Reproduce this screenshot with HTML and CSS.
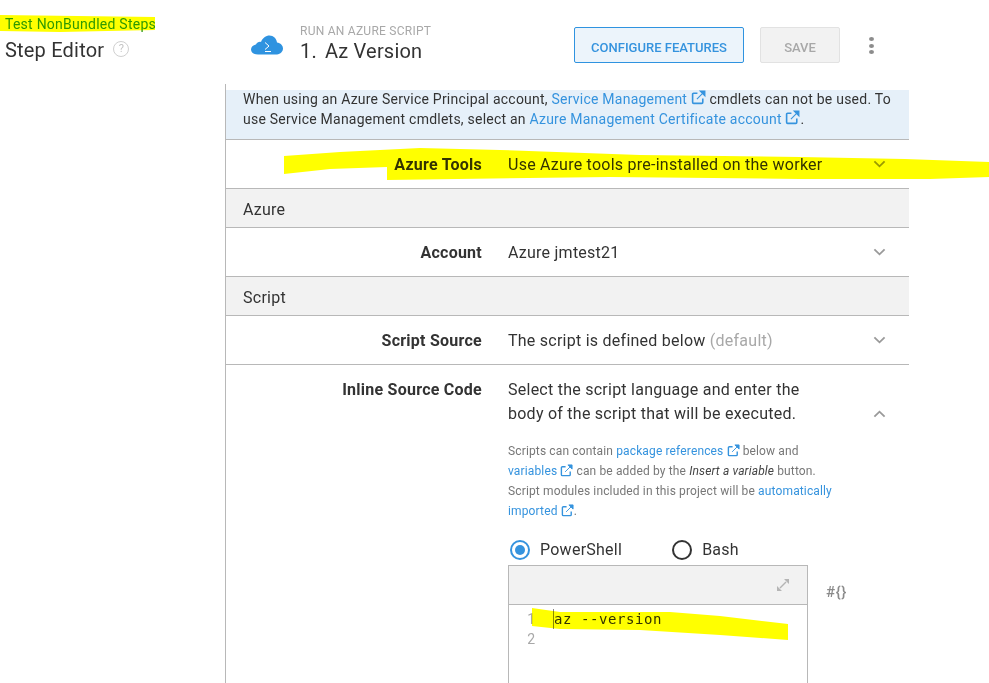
FILE: index.html
```html
<!DOCTYPE html>
<html lang="en">
<head>
<meta charset="utf-8">
<title>Step Editor</title>
<link rel="stylesheet" href="styles.css">
</head>
<body>
<div class="page">
  <svg class="defs" width="0" height="0"><symbol id="ext" viewBox="0 0 14 14"><path d="M11 8v3.500a1 1 0 0 1-1 1H2.500a1 1 0 0 1-1-1V4a1 1 0 0 1 1-1H6" fill="none" stroke="currentColor" stroke-width="1.500"/><path d="M5.500 8.500 12 2M8.500 1h4.500v4.500z" fill="currentColor" stroke="currentColor" stroke-width="1"/></symbol><symbol id="chev" viewBox="0 0 14 8"><path d="M1.500 1.200 7 6.500l5.500-5.300" fill="none" stroke="currentColor" stroke-width="2"/></symbol></svg>
  <aside class="side">
    <div class="project">Test NonBundled Steps</div>
    <h1 class="side-title">Step Editor <span class="help">?</span></h1>
  </aside>
  <main class="main">
    <header class="head">
      <svg class="cloud" viewBox="0 0 32 20"><path d="M7 19.500C3 19.500 0 17.500 0 14.500c0-2.500 2-4.500 5-5C6 7.500 8 6.500 10 7c1.500-4 5-6.500 8.500-6.500 4 0 7 3 7.500 7 3.500.5 6 3 6 6 0 3-2.500 5.500-6 6z" fill="#2f93e0"/><path d="m14 7.500 4 3.500-4 3.500M14 16.500h6" fill="none" stroke="#fff" stroke-width="1"/></svg>
      <div class="titles">
        <div class="kicker">RUN AN AZURE SCRIPT</div>
        <div class="step-name"><span class="num">1.</span>Az Version</div>
      </div>
      <div class="actions">
        <button class="btn btn-primary">CONFIGURE FEATURES</button>
        <button class="btn btn-disabled">SAVE</button>
        <span class="dots"><i></i><i></i><i></i></span>
      </div>
    </header>
    <section class="panel">
      <div class="callout">
        <div>When using an Azure Service Principal account, <a>Service Management <svg class="ext"><use href="#ext"/></svg></a> cmdlets can not be used. To</div>
        <div>use Service Management cmdlets, select an <a>Azure Management Certificate account <svg class="ext"><use href="#ext"/></svg></a>.</div>
      </div>
      <div class="row">
        <div class="label">Azure Tools</div>
        <div class="value">Use Azure tools pre-installed on the worker</div>
        <svg class="chev"><use href="#chev"/></svg>
      </div>
      <div class="section">Azure</div>
      <div class="row">
        <div class="label">Account</div>
        <div class="value">Azure jmtest21</div>
        <svg class="chev"><use href="#chev"/></svg>
      </div>
      <div class="section">Script</div>
      <div class="row">
        <div class="label">Script Source</div>
        <div class="value">The script is defined below <span class="muted">(default)</span></div>
        <svg class="chev"><use href="#chev"/></svg>
      </div>
      <div class="row row-open">
        <div class="label">Inline Source Code</div>
        <div class="open-body">
          <div class="summary">
            <div class="summary-text"><div>Select the script language and enter the</div><div>body of the script that will be executed.</div></div>
            <svg class="chev chev-up"><use href="#chev"/></svg>
          </div>
          <div class="note">
            <div>Scripts can contain <a>package references <svg class="ext ext-sm"><use href="#ext"/></svg></a> below and</div>
            <div><a>variables <svg class="ext ext-sm"><use href="#ext"/></svg></a> can be added by the <em>Insert a variable</em> button.</div>
            <div>Script modules included in this project will be <a>automatically</a></div>
            <div><a>imported <svg class="ext ext-sm"><use href="#ext"/></svg></a>.</div>
          </div>
          <div class="radios">
            <span class="radio radio-on"><i class="ring"></i>PowerShell</span>
            <span class="radio"><i class="ring"></i>Bash</span>
          </div>
          <div class="editor-wrap">
            <div class="editor">
              <div class="toolbar">
                <svg class="expand" viewBox="0 0 14 14"><path d="M8 1h5v5zM1 8v5h5z" fill="#b5b5b5"/><path d="m4 10 6-6" stroke="#b5b5b5" stroke-width="1.500"/></svg>
              </div>
              <div class="code">
                <div class="gutter"><div>1</div><div>2</div></div>
                <div class="lines"><div>az --version</div></div>
              </div>
            </div>
            <span class="insert">#{}</span>
          </div>
        </div>
      </div>
    </section>
  </main>
  <svg class="marker" viewBox="0 0 989 683" width="989" height="683">
    <path d="M0 15 155 17V30L60 32 0 31Z"/>
    <path d="M284 156 340 152 420 148 500 150 640 155 800 157 905 159 989 162V177L930 179 800 179 610 177 387 180V167L330 169 284 174Z"/>
    <path d="M532 608 560 612 670 612 720 616 788 624V640L720 635 640 630 560 629 532 626Z"/>
  </svg>
</div>
</body>
</html>
```
FILE: styles.css
```css
* { box-sizing: border-box; }
html, body { margin: 0; padding: 0; background: #fff; }
body { font-family: Roboto, "Liberation Sans", sans-serif; color: #333; }
.page { position: relative; width: 989px; height: 683px; overflow: hidden; display: flex; }
.defs { position: absolute; }
.side { width: 225px; flex: none; padding: 16px 0 0 5px; }
.project { font-size: 14px; line-height: 17px; color: #2f9a10; letter-spacing: .25px; }
.side-title { margin: 5px 0 0; font-size: 20px; line-height: 24px; font-weight: 400; color: #333; display: flex; align-items: center; gap: 8px; letter-spacing: .2px; }
.help { width: 16px; height: 16px; margin: -2px 0 0 1px; border: 1.500px solid #d0d0d0; border-radius: 50%; font-size: 11px; line-height: 13px; text-align: center; color: #c4c4c4; letter-spacing: 0; }
.main { width: 684px; flex: none; display: flex; flex-direction: column; }
.head { height: 84px; flex: none; display: flex; align-items: flex-start; padding: 24px 0 0 26px; position: relative; }
.cloud { width: 32px; height: 20px; margin-top: 11px; flex: none; }
.titles { margin-left: 17px; width: 274px; }
.kicker { font-size: 12px; line-height: 14px; color: #a8a8a8; letter-spacing: .25px; }
.step-name { font-size: 20px; line-height: 24px; margin-top: 1px; color: #333; letter-spacing: .2px; }
.num { margin-right: 8px; }
.actions { display: flex; align-items: flex-start; gap: 16px; margin-top: 3px; }
.btn { height: 36px; border-radius: 2px; font: 500 13px/1 Roboto, "Liberation Sans", sans-serif; padding: 4px 0 0; }
.btn-primary { width: 170px; border: 1px solid #2f93e0; background: #ecf4fb; color: #3593de; }
.btn-disabled { width: 80px; border: 1px solid #e2e2e2; background: #f2f2f2; color: #a8a8a8; }
.dots { display: flex; flex-direction: column; gap: 2.500px; margin: 10px 0 0 13px; }
.dots i { width: 5px; height: 4px; border-radius: 50%; background: #8c8c8c; display: block; }
.panel { border-left: 1px solid #b8b8b8; flex: 1; }
a { color: #3593de; }
.ext { width: 15px; height: 15px; vertical-align: -1px; color: #3593de; }
.ext-sm { width: 13px; height: 13px; vertical-align: -2px; }
.callout { display: flow-root; margin-top: 6px; height: 50px; padding: 0 17px; background: #e6f0f9; border-bottom: 1px solid #b8b8b8; font-size: 14px; line-height: 20px; letter-spacing: .23px; color: #333; white-space: nowrap; }
.callout > div:first-child { margin-top: -1px; }
.row { display: flex; align-items: flex-start; height: 49px; border-bottom: 1px solid #b8b8b8; font-size: 16px; line-height: 20px; padding-top: 15px; letter-spacing: .25px; }
.label { width: 256px; text-align: right; font-weight: 700; color: #333; flex: none; }
.value { margin-left: 26px; width: 365px; flex: none; color: #333; white-space: nowrap; }
.muted { color: #a8a8a8; }
.chev { width: 13px; height: 8px; color: #9a9a9a; margin-top: 5px; flex: none; }
.chev-up { transform: rotate(180deg); margin: 0 0 0 65px; align-self: flex-end; position: relative; top: -8px; }
.section { height: 39px; background: #f2f2f2; border-bottom: 1px solid #b8b8b8; padding: 0 17px; font-size: 16px; line-height: 41px; color: #333; letter-spacing: .25px; }
.row-open { height: 330px; border-bottom: 0; }
.open-body { margin-left: 26px; width: 380px; flex: none; }
.summary { display: flex; align-items: flex-start; }
.summary-text { width: 300px; flex: none; line-height: 24px; margin-top: -2px; white-space: nowrap; }
.note { margin: 15px 0 0; width: 340px; font-size: 12px; line-height: 20px; color: #777; letter-spacing: .14px; white-space: nowrap; }
.note em { color: #444; }
.radios { display: flex; gap: 48px; margin-top: 19px; height: 20px; }
.radio { display: inline-flex; align-items: center; gap: 10px; font-size: 16px; padding-left: 2px; }
.ring { width: 20px; height: 20px; border: 2px solid #333; border-radius: 50%; display: block; position: relative; }
.radio-on .ring { border-color: #3593de; }
.radio-on .ring::after { content: ""; position: absolute; inset: 3px; border-radius: 50%; background: #3593de; }
.editor-wrap { display: flex; align-items: flex-start; margin-top: 5px; }
.editor { width: 300px; height: 200px; border: 1px solid #b8b8b8; flex: none; }
.toolbar { height: 39px; background: #f2f2f2; border-bottom: 1px solid #b8b8b8; display: flex; justify-content: flex-end; align-items: center; padding-right: 17px; }
.expand { width: 14px; height: 14px; }
.code { display: flex; font-family: "DejaVu Sans Mono", "Liberation Mono", monospace; font-size: 14px; letter-spacing: .57px; line-height: 20px; padding-top: 4px; }
.gutter { width: 26px; text-align: right; color: #a8a8a8; font-family: Roboto, sans-serif; font-size: 14px; letter-spacing: 0; }
.lines { margin-left: 18px; color: #333; border-left: 1px solid #888; height: 20px; }
.insert { margin: 17px 0 0 18px; font-size: 15px; font-weight: 500; color: #8a8a8a; letter-spacing: .6px; }
.marker { position: absolute; left: 0; top: 0; mix-blend-mode: multiply; pointer-events: none; }
.marker path { fill: #ffff00; }
```
